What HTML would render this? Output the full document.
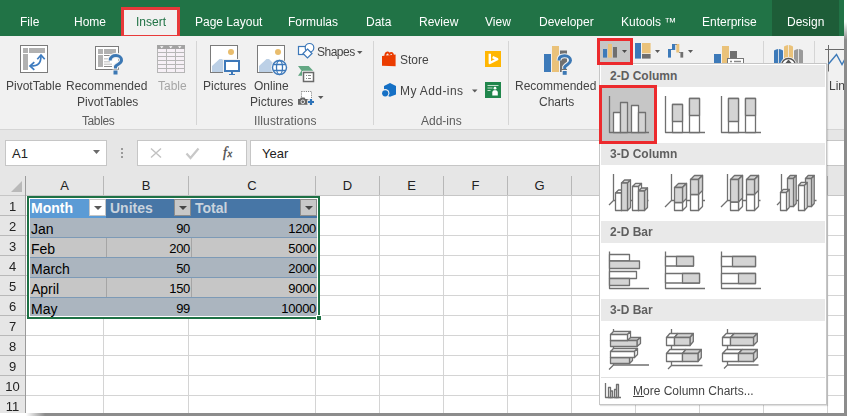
<!DOCTYPE html>
<html><head><meta charset="utf-8">
<style>
*{margin:0;padding:0;box-sizing:border-box}
html,body{width:847px;height:416px;overflow:hidden;background:#fff;font-family:"Liberation Sans",sans-serif}
.a{position:absolute;white-space:nowrap}
#tabs{position:absolute;left:0;top:0;width:847px;height:36px;background:#217346}
.tab{position:absolute;top:15px;font-size:12px;color:#fff;line-height:14px;will-change:transform}
#ribbon{position:absolute;left:0;top:36px;width:847px;height:94px;background:#f1f1f1;border-bottom:1px solid #d5d5d5}
.rl{position:absolute;font-size:12px;color:#444;line-height:14px;will-change:transform}
.gl{position:absolute;will-change:transform;font-size:12px;color:#5c5c5c;line-height:14px;top:114px}
.sep{position:absolute;top:41px;width:1px;height:84px;background:#d5d5d5}
#fbar{position:absolute;left:0;top:130px;width:847px;height:66px;background:#e6e6e6}
.box{position:absolute;background:#fff;border:1px solid #c6c6c6}
.ch{position:absolute;top:176px;height:19px;font-size:13px;color:#222;text-align:center;line-height:20px}
.cl{position:absolute;top:176px;width:1px;height:19px;background:#b7b7b7}
.rh{position:absolute;left:0;width:25px;height:19px;font-size:13px;color:#222;text-align:center;line-height:21px}
.gv{position:absolute;top:196px;width:1px;height:220px;background:#d4d4d4}
.gh{position:absolute;left:26px;height:1px;width:821px;background:#d4d4d4}
.rhl{position:absolute;left:0;width:25px;height:1px;background:#b9b9b9}
.cell{position:absolute;font-size:12px;line-height:19px;height:19px;color:#000}
.fb{position:absolute;top:199px;width:17px;height:17px;background:#c8c8c8;border:1px solid #8c8c8c}
.fb i{position:absolute;left:4px;top:6px;width:0;height:0;border-left:4px solid transparent;border-right:4px solid transparent;border-top:4px solid #464646}
.tc{position:absolute;font-size:14px;line-height:20px;color:#000;white-space:nowrap}
.band{position:absolute;left:601px;width:224px;height:22px;background:#e9e9e9}
.bt{position:absolute;left:610px;font-size:12px;font-weight:bold;color:#5f5f5f;line-height:22px;white-space:nowrap}
</style></head><body>
<!-- tabs -->
<div id="tabs">
  <div class="a" style="left:772px;top:0;width:67px;height:36px;background:#1e5d38"></div>
  <div class="a" style="left:121px;top:7px;width:59px;height:31px;background:#f1f1f1;border:3px solid #e8393a;border-bottom:none"></div>
  <div class="a" style="left:121px;top:7px;width:59px;height:31px;border:3px solid #e8393a"></div>
  <span class="tab a" style="left:20px">File</span>
  <span class="tab a" style="left:74px">Home</span>
  <span class="tab a" style="left:136px;color:#217346">Insert</span>
  <span class="tab a" style="left:195px">Page Layout</span>
  <span class="tab a" style="left:288px">Formulas</span>
  <span class="tab a" style="left:366px">Data</span>
  <span class="tab a" style="left:419px">Review</span>
  <span class="tab a" style="left:485px">View</span>
  <span class="tab a" style="left:539px">Developer</span>
  <span class="tab a" style="left:621px">Kutools ™</span>
  <span class="tab a" style="left:702px">Enterprise</span>
  <span class="tab a" style="left:787px">Design</span>
</div>
<!-- ribbon -->
<div id="ribbon"></div>
<span class="rl a" style="left:6px;top:79px">PivotTable</span>
<span class="rl a" style="left:66px;top:79px">Recommended</span>
<span class="rl a" style="left:77px;top:95px">PivotTables</span>
<span class="rl a" style="left:158px;top:79px;color:#a6a6a6">Table</span>
<span class="gl a" style="left:82px;letter-spacing:-0.4px">Tables</span>
<div class="sep" style="left:196px"></div>
<span class="rl a" style="left:203px;top:79px">Pictures</span>
<span class="rl a" style="left:254px;top:79px">Online</span>
<span class="rl a" style="left:250px;top:95px">Pictures</span>
<span class="rl a" style="left:317px;top:45px;letter-spacing:-0.5px">Shapes</span>
<span class="gl a" style="left:254px;letter-spacing:0.15px">Illustrations</span>
<div class="sep" style="left:373px"></div>
<span class="rl a" style="left:400px;top:53px">Store</span>
<span class="rl a" style="left:400px;top:84px;letter-spacing:0.4px">My Add-ins</span>
<span class="gl a" style="left:421px">Add-ins</span>
<div class="sep" style="left:508px"></div>
<span class="rl a" style="left:515px;top:79px">Recommended</span>
<span class="rl a" style="left:539px;top:95px">Charts</span>
<span class="rl a" style="left:829px;top:79px">Lin</span>

<svg class="a" style="left:0;top:0" width="847" height="130">
<!-- PivotTable -->
<rect x="20.5" y="45.5" width="27" height="27" fill="#fff" stroke="#7b7b7b"/>
<rect x="23" y="48" width="5" height="5" fill="#b1b1b1"/>
<rect x="29" y="48" width="16" height="5" fill="#b1b1b1"/>
<rect x="23" y="54" width="5" height="16" fill="#b1b1b1"/>
<path d="M30.5,66 C38.5,66 41,63 41,55.5" fill="none" stroke="#3d7bbf" stroke-width="1.7"/>
<path d="M37.3,59.3 L41,55 L44.7,59.3" fill="none" stroke="#3d7bbf" stroke-width="1.7"/>
<path d="M34.3,62.2 L30,66 L34.3,69.8" fill="none" stroke="#3d7bbf" stroke-width="1.7"/>
<!-- Recommended PivotTables -->
<rect x="95.5" y="46.5" width="23" height="23" fill="#fff" stroke="#7b7b7b"/>
<rect x="98" y="49" width="5" height="5" fill="#b1b1b1"/>
<rect x="104" y="49" width="12" height="5" fill="#b1b1b1"/>
<rect x="98" y="55" width="5" height="12" fill="#b1b1b1"/>
<rect x="104" y="55" width="9" height="1" fill="#8a8a8a"/>
<rect x="104" y="58" width="8" height="1.5" fill="#d0d0d0"/>
<rect x="104" y="61" width="6" height="1.5" fill="#d0d0d0"/>
<rect x="104" y="63.5" width="8" height="1.5" fill="#d0d0d0"/>
<rect x="104" y="66" width="8" height="1" fill="#8a8a8a"/>
<path d="M110.2,60.5 C110.2,57 113,55.5 116,55.5 C119.2,55.5 121.5,57.5 121.5,60.3 C121.5,63.5 117.5,64 115.5,66.5 L115.5,68.5" fill="none" stroke="#f1f1f1" stroke-width="5.5"/>
<rect x="112.5" y="69.5" width="6" height="6" fill="#f1f1f1"/>
<path d="M110.2,60.5 C110.2,57 113,55.5 116,55.5 C119.2,55.5 121.5,57.5 121.5,60.3 C121.5,63.5 117.5,64 115.5,66.5 L115.5,68.5" fill="none" stroke="#3c78b4" stroke-width="3"/>
<rect x="113.5" y="70.5" width="4" height="4" fill="#3c78b4"/>
<!-- Table (disabled) -->
<rect x="157" y="45" width="28" height="28" fill="#b6b6b6"/>
<rect x="157" y="45" width="28" height="4" fill="#a3a3a3"/>
<path d="M160,46.2 h3.5 l-1.75,2 z M169,46.2 h3.5 l-1.75,2 z M178,46.2 h3.5 l-1.75,2 z" fill="#fff"/>
<g fill="#f6f0f6">
<rect x="158" y="49" width="8" height="3"/><rect x="167" y="49" width="8" height="3"/><rect x="176" y="49" width="8" height="3"/>
<rect x="158" y="53" width="8" height="3"/><rect x="167" y="53" width="8" height="3"/><rect x="176" y="53" width="8" height="3"/>
<rect x="158" y="57" width="8" height="3"/><rect x="167" y="57" width="8" height="3"/><rect x="176" y="57" width="8" height="3"/>
<rect x="158" y="61" width="8" height="3"/><rect x="167" y="61" width="8" height="3"/><rect x="176" y="61" width="8" height="3"/>
<rect x="158" y="65" width="8" height="3"/><rect x="167" y="65" width="8" height="3"/><rect x="176" y="65" width="8" height="3"/>
<rect x="158" y="69" width="8" height="3"/><rect x="167" y="69" width="8" height="3"/><rect x="176" y="69" width="8" height="3"/>
</g>
<!-- Pictures -->
<rect x="210.5" y="45.5" width="27" height="27" fill="#fff" stroke="#7b7b7b"/>
<circle cx="231" cy="52" r="3" fill="#e9bd6d"/>
<path d="M212,72 V66 L219.5,59 H222 L228,65 V72 Z" fill="#bcd0e6"/>
<rect x="223" y="59" width="18" height="14" fill="#f1f1f1"/>
<rect x="224" y="60" width="16" height="12" fill="#3d78b9"/>
<rect x="226" y="62" width="12" height="8" fill="#fff"/>
<rect x="231" y="72" width="2" height="2" fill="#3d78b9"/>
<rect x="229" y="74" width="6" height="1" fill="#3d78b9"/>
<!-- Online Pictures -->
<rect x="257.5" y="45.5" width="27" height="27" fill="#fff" stroke="#7b7b7b"/>
<circle cx="278" cy="52" r="3" fill="#e9bd6d"/>
<path d="M259,72 V66 L266.5,59 H269 L275,65 V72 Z" fill="#bcd0e6"/>
<circle cx="279.5" cy="67.5" r="8.5" fill="#f1f1f1"/>
<circle cx="279.5" cy="67.5" r="7" fill="#fff" stroke="#3d78b9" stroke-width="1.4"/>
<ellipse cx="279.5" cy="67.5" rx="3" ry="7" fill="none" stroke="#3d78b9" stroke-width="1.3"/>
<path d="M273,64.5 H286 M273,70.5 H286" stroke="#3d78b9" stroke-width="1.3"/>
<!-- Shapes -->
<rect x="298.5" y="46.5" width="8" height="8" fill="#fff" stroke="#3d78b9" stroke-width="1.2"/>
<circle cx="309.5" cy="47.8" r="4.3" fill="#fff" stroke="#3d78b9" stroke-width="1.2"/>
<path d="M307.5,49 L312,53.5 L307.5,58 L303,53.5 Z" fill="#fff" stroke="#3d78b9" stroke-width="1.2"/>
<path d="M357,51 h5.5 l-2.75,3 z" fill="#5a5a5a"/>
<!-- SmartArt -->
<path d="M298,66 H308.7 L313.2,70.8 H303 V75.8 H298 L301.5,70.8 Z" fill="#63a783"/>
<rect x="302" y="71" width="13" height="12" fill="#f1f1f1"/>
<rect x="303.5" y="72.5" width="10" height="9" fill="#fff" stroke="#6a6a6a" stroke-width="1.5"/>
<path d="M306,75.5 h1 M308,75.5 h3 M306,78.5 h1 M308,78.5 h3" stroke="#888" stroke-width="1"/>
<!-- Screenshot -->
<rect x="301.5" y="91.5" width="10" height="8" fill="#fff" stroke="#777" stroke-dasharray="1,1.2"/>
<path d="M298,99 H300 L301,97.5 H304.5 L305.5,99 H307.5 V104.8 H298 Z" fill="#666"/>
<circle cx="302.8" cy="101.8" r="1.8" fill="none" stroke="#eee" stroke-width="1"/>
<path d="M311,98.5 V105.5 M307.5,102 H314.5" stroke="#f1f1f1" stroke-width="4"/>
<path d="M311,99 V105 M308,102 H314" stroke="#2e73b8" stroke-width="2.2"/>
<path d="M318,96 h5.5 l-2.75,3 z" fill="#5a5a5a"/>
<!-- Store -->
<path d="M385.3,56 C385.3,51.5 389.5,51.5 389.5,55 C389.5,52 393,52 393,55.5" fill="none" stroke="#eb3c00" stroke-width="1.8"/>
<path d="M382,56 L395.6,54.4 V66.2 L382,65.8 Z" fill="#eb3c00"/>
<!-- My Add-ins -->
<path d="M390,83 L396,86 V94.5 L390,96.8 L384,94.5 V86 Z" fill="#1570c5"/>
<circle cx="385.2" cy="93.3" r="4.2" fill="#f1f1f1"/>
<circle cx="385.2" cy="93.3" r="3.1" fill="#1570c5"/>
<path d="M397.2,90.5 h5.5 l-2.75,3 z" fill="none"/>
<path d="M472,89.5 h5.5 l-2.75,3 z" fill="#5a5a5a"/>
<!-- Bing -->
<rect x="485" y="51" width="16" height="16" fill="#ffb602"/>
<path d="M489.8,53.8 V63 L497.2,59.2 L492.6,57.2" fill="none" stroke="#fff" stroke-width="2.4" stroke-linejoin="round"/>
<!-- People graph -->
<rect x="485" y="82" width="16" height="16" fill="#20864c"/>
<path d="M487.5,85.5 h11 M487.5,88 h5 M487.5,90.5 h3" stroke="#d6eadd" stroke-width="0.9"/>
<circle cx="495" cy="88.2" r="1.4" fill="#fff"/>
<path d="M492.3,95.5 V92.5 C492.3,90.8 493.5,90.3 495,90.3 C496.5,90.3 497.8,90.8 497.8,92.5 V95.5 Z" fill="#fff"/>
<!-- Recommended Charts -->
<rect x="544" y="54" width="7" height="18" fill="#3d7ab9"/>
<rect x="552" y="46" width="7" height="26" fill="#eac27a"/>
<rect x="560" y="50.5" width="7" height="21.5" fill="#707070"/>
<path d="M559,60.5 C559,57 561.5,55.8 564.7,55.8 C568,55.8 570.5,57.8 570.5,60.5 C570.5,63.8 566.5,64.2 564.7,67 L564.7,69" fill="none" stroke="#f1f1f1" stroke-width="5"/>
<rect x="561.7" y="70" width="6" height="6" fill="#f1f1f1"/>
<path d="M559,60.5 C559,57 561.5,55.8 564.7,55.8 C568,55.8 570.5,57.8 570.5,60.5 C570.5,63.8 566.5,64.2 564.7,67 L564.7,69" fill="none" stroke="#3c78b4" stroke-width="3"/>
<rect x="562.7" y="71" width="4" height="3.8" fill="#3c78b4"/>
<!-- Column chart button (selected) -->
<!-- Hierarchy -->
<rect x="635" y="43" width="6" height="15.6" fill="#3d7ab9"/>
<rect x="642" y="43" width="8.6" height="10.3" fill="#eac27a"/>
<rect x="642" y="54" width="8.6" height="4.6" fill="#6f6f6f"/>
<path d="M655,50 h5 l-2.5,3 z" fill="#5a5a5a"/>
<!-- Waterfall -->
<path d="M669.5,49.5 H673.6" stroke="#3d7ab9" stroke-width="1"/>
<rect x="668" y="49" width="3" height="8.6" fill="#3d7ab9"/>
<rect x="672" y="44" width="3.2" height="6" fill="#3d7ab9"/>
<rect x="676.3" y="44" width="3" height="8.5" fill="#eac27a"/>
<rect x="680.4" y="52" width="2.8" height="5.6" fill="#6f6f6f"/>
<path d="M675,44.5 H677 M679,52.5 H681" stroke="#888" stroke-width="1"/>
<path d="M688,50 h5 l-2.5,3 z" fill="#5a5a5a"/>
<!-- Pivot chart -->
<rect x="714" y="54" width="7" height="12" fill="#3d7ab9"/>
<rect x="722" y="46" width="7" height="20" fill="#eac27a"/>
<rect x="730" y="51" width="7" height="15" fill="#707070"/>
<rect x="727.5" y="58.5" width="16" height="8" fill="#fff" stroke="#777"/>
<path d="M730,61.5 h2 M734,61.5 h7" stroke="#888" stroke-width="1.5"/>
<rect x="763" y="41" width="1" height="84" fill="#d5d5d5"/>
<!-- Maps -->
<path d="M774,50.5 Q776,49 778.2,49 V66 H774 Z M779,49 Q781,49 783,50.5 V66 H779 Z" fill="#3d7ab9"/>
<path d="M784,46.5 Q786,45 788.2,45 V66 H784 Z M789,45 Q791,45 793,46.5 V66 H789 Z" fill="#eac27a"/>
<path d="M794,50.5 Q796,49 798.2,49 V66 H794 Z M799,49 Q801,49 803,50.5 V66 H799 Z" fill="#9a9a9a"/>
<circle cx="788.5" cy="65.5" r="8.5" fill="#f1f1f1"/>
<circle cx="788.5" cy="65.5" r="7" fill="#fff" stroke="#555" stroke-width="1.4"/>
<path d="M785.5,63 L788.5,59.5 L791.5,63 Z" fill="#555"/>
<rect x="814" y="41" width="1" height="84" fill="#d5d5d5"/>
<!-- Line chart -->
<path d="M828.5,45 V71.5 M825,49.5 H844" stroke="#6a6a6a" stroke-width="1"/>
<path d="M828.5,64 L836.5,54.5 L842,64.5 L846,57" fill="none" stroke="#3d7ab9" stroke-width="1.4"/>
</svg>

<!-- formula bar -->
<div id="fbar"></div>
<div class="box" style="left:5px;top:140px;width:102px;height:26px"></div>
<span class="a" style="left:12px;top:146px;font-size:13px;color:#222">A1</span>
<div class="box" style="left:137px;top:140px;width:110px;height:26px"></div>
<div class="box" style="left:250px;top:140px;width:597px;height:26px"></div>
<span class="a" style="left:262px;top:146px;font-size:13px;color:#222">Year</span>

<svg class="a" style="left:0;top:130px" width="260" height="66">
<path d="M93,20 H100 L96.5,24 Z" fill="#6a6a6a"/>
<rect x="121" y="18" width="2" height="2" fill="#9a9a9a"/>
<rect x="121" y="22" width="2" height="2" fill="#9a9a9a"/>
<rect x="121" y="26" width="2" height="2" fill="#9a9a9a"/>
<path d="M151,18.5 L161,27.5 M161,18.5 L151,27.5" stroke="#c2c2c2" stroke-width="1.4"/>
<path d="M186.5,23.5 L190.5,28 L198.5,18.5" fill="none" stroke="#c8c8c8" stroke-width="2.2"/>
<text x="223" y="26.5" font-family="Liberation Serif" font-style="italic" font-size="14" fill="#4a4a4a" stroke="#4a4a4a" stroke-width="0.3">f</text>
<text x="227.5" y="27" font-family="Liberation Serif" font-style="italic" font-size="10.5" fill="#4a4a4a" stroke="#4a4a4a" stroke-width="0.3">x</text>
<path d="M22,51 V62 H11 Z" fill="#b9b9b9"/>
</svg>
<!-- column headers -->
<span class="ch" style="left:26px;width:77px">A</span>
<span class="ch" style="left:104px;width:84px">B</span>
<span class="ch" style="left:189px;width:126px">C</span>
<span class="ch" style="left:316px;width:63px">D</span>
<span class="ch" style="left:380px;width:63px">E</span>
<span class="ch" style="left:444px;width:63px">F</span>
<span class="ch" style="left:508px;width:63px">G</span>
<div class="cl" style="left:25px"></div>
<div class="cl" style="left:103px"></div>
<div class="cl" style="left:188px"></div>
<div class="cl" style="left:315px"></div>
<div class="cl" style="left:379px"></div>
<div class="cl" style="left:443px"></div>
<div class="cl" style="left:507px"></div>
<div class="cl" style="left:571px"></div>
<div class="cl" style="left:635px"></div>
<div class="cl" style="left:699px"></div>
<div class="cl" style="left:763px"></div>
<div class="cl" style="left:827px"></div>
<div class="a" style="left:0;top:195px;width:847px;height:1px;background:#c6c6c6"></div>

<!-- grid -->
<div class="a" style="left:0;top:196px;width:25px;height:220px;background:#e6e6e6"></div>
<div class="a" style="left:25px;top:176px;width:1px;height:240px;background:#9b9b9b"></div>
<div class="gv" style="left:103px"></div>
<div class="gv" style="left:188px"></div>
<div class="gv" style="left:315px"></div>
<div class="gv" style="left:379px"></div>
<div class="gv" style="left:443px"></div>
<div class="gv" style="left:507px"></div>
<div class="gv" style="left:571px"></div>
<div class="gv" style="left:635px"></div>
<div class="gv" style="left:699px"></div>
<div class="gv" style="left:763px"></div>
<div class="gv" style="left:827px"></div>
<div class="gh" style="top:215px"></div>
<div class="gh" style="top:235px"></div>
<div class="gh" style="top:255px"></div>
<div class="gh" style="top:275px"></div>
<div class="gh" style="top:295px"></div>
<div class="gh" style="top:315px"></div>
<div class="gh" style="top:335px"></div>
<div class="gh" style="top:355px"></div>
<div class="gh" style="top:375px"></div>
<div class="gh" style="top:395px"></div>
<div class="rhl" style="top:215px"></div>
<div class="rhl" style="top:235px"></div>
<div class="rhl" style="top:255px"></div>
<div class="rhl" style="top:275px"></div>
<div class="rhl" style="top:295px"></div>
<div class="rhl" style="top:315px"></div>
<div class="rhl" style="top:335px"></div>
<div class="rhl" style="top:355px"></div>
<div class="rhl" style="top:375px"></div>
<div class="rhl" style="top:395px"></div>
<span class="rh" style="top:196px">1</span>
<span class="rh" style="top:216px">2</span>
<span class="rh" style="top:236px">3</span>
<span class="rh" style="top:256px">4</span>
<span class="rh" style="top:276px">5</span>
<span class="rh" style="top:296px">6</span>
<span class="rh" style="top:316px">7</span>
<span class="rh" style="top:336px">8</span>
<span class="rh" style="top:356px">9</span>
<span class="rh" style="top:376px">10</span>
<span class="rh" style="top:396px">11</span>

<!-- table -->
<div id="tbl">
<div class="a" style="left:27px;top:196px;width:293px;height:123px;background:#1e7145"></div>
<div class="a" style="left:29px;top:198px;width:289px;height:119px;background:#fff"></div>
<div class="a" style="left:30px;top:199px;width:287px;height:19px;background:#4776a6"></div>
<div class="a" style="left:30px;top:199px;width:76px;height:19px;background:#5b9bd5"></div>
<div class="a" style="left:30px;top:218px;width:287px;height:98px;background:#abb5bf"></div>
<div class="a" style="left:30px;top:237px;width:287px;height:1px;background:#7d9ab6"></div>
<div class="a" style="left:30px;top:238px;width:287px;height:19px;background:#c6c6c6"></div>
<div class="a" style="left:30px;top:257px;width:287px;height:1px;background:#7d9ab6"></div>
<div class="a" style="left:30px;top:277px;width:287px;height:1px;background:#7d9ab6"></div>
<div class="a" style="left:30px;top:278px;width:287px;height:19px;background:#c6c6c6"></div>
<div class="a" style="left:30px;top:297px;width:287px;height:1px;background:#7d9ab6"></div>
<div class="a" style="left:106px;top:238px;width:1px;height:19px;background:#a5a5a5"></div>
<div class="a" style="left:191px;top:238px;width:1px;height:19px;background:#a5a5a5"></div>
<div class="a" style="left:106px;top:278px;width:1px;height:19px;background:#a5a5a5"></div>
<div class="a" style="left:191px;top:278px;width:1px;height:19px;background:#a5a5a5"></div>
<div class="a" style="left:316px;top:315px;width:6px;height:6px;background:#1e7145;border:1px solid #fff"></div>
<div class="fb" style="left:89px;background:#fff;border-color:#c6c6c6"><i style="border-top-color:#595959"></i></div>
<div class="fb" style="left:174px"><i></i></div>
<div class="fb" style="left:300px"><i></i></div>
<span class="tc" style="left:31px;top:198px;color:#fff;font-weight:bold;font-size:14px">Month</span>
<span class="tc" style="left:110px;top:198px;color:#c9d3dd;font-weight:bold;font-size:14px">Unites</span>
<span class="tc" style="left:195px;top:198px;color:#c9d3dd;font-weight:bold;font-size:14px">Total</span>
<span class="tc" style="left:31px;top:219px">Jan</span>
<span class="tc" style="left:31px;top:239px">Feb</span>
<span class="tc" style="left:31px;top:259px">March</span>
<span class="tc" style="left:31px;top:279px">April</span>
<span class="tc" style="left:31px;top:299px">May</span>
<span class="tc r" style="font-size:13px;letter-spacing:-0.3px;right:657px;top:219px">90</span>
<span class="tc r" style="font-size:13px;letter-spacing:-0.3px;right:657px;top:239px">200</span>
<span class="tc r" style="font-size:13px;letter-spacing:-0.3px;right:657px;top:259px">50</span>
<span class="tc r" style="font-size:13px;letter-spacing:-0.3px;right:657px;top:279px">150</span>
<span class="tc r" style="font-size:13px;letter-spacing:-0.3px;right:657px;top:299px">99</span>
<span class="tc r" style="font-size:13px;letter-spacing:-0.3px;right:531px;top:219px">1200</span>
<span class="tc r" style="font-size:13px;letter-spacing:-0.3px;right:531px;top:239px">5000</span>
<span class="tc r" style="font-size:13px;letter-spacing:-0.3px;right:531px;top:259px">2000</span>
<span class="tc r" style="font-size:13px;letter-spacing:-0.3px;right:531px;top:279px">9000</span>
<span class="tc r" style="font-size:13px;letter-spacing:-0.3px;right:531px;top:299px">10000</span>
</div>

<!-- dropdown -->
<div id="dd">
<div class="a" style="left:599px;top:63px;width:228px;height:342px;background:#fff;border:1px solid #c6c6c6;box-shadow:1px 1px 1px rgba(0,0,0,0.12)"></div>
<div class="band" style="top:65px"></div>
<div class="band" style="top:143px"></div>
<div class="band" style="top:221px"></div>
<div class="band" style="top:299px"></div>
<span class="bt" style="top:65px">2-D Column</span>
<span class="bt" style="top:143px">3-D Column</span>
<span class="bt" style="top:221px">2-D Bar</span>
<span class="bt" style="top:299px">3-D Bar</span>
<div class="a" style="left:601px;top:377px;width:224px;height:1px;background:#e1e1e1"></div>
<span class="a" style="left:633px;top:384px;font-size:12px;line-height:14px;color:#444">More Column Charts...</span>
<div class="a" style="left:633px;top:396px;width:11px;height:1px;background:#444"></div>
<div class="a" style="left:599px;top:85px;width:58px;height:59px;background:#c6c6c6;border:3px solid #ec2a2d"></div>
<svg class="a" style="left:0;top:0" width="847" height="416">
<g fill="none" stroke="#707070" stroke-width="1.3" stroke-linejoin="round">
<!-- 2D clustered column -->
<path d="M609.5,96 V132.5 H649"/>
<rect x="613.5" y="112.5" width="7" height="20" fill="#fff"/>
<rect x="620.5" y="102.5" width="7" height="30" fill="#d4d4d4"/>
<rect x="631.5" y="105.5" width="7" height="27" fill="#fff"/>
<rect x="638.5" y="112.5" width="7" height="20" fill="#d4d4d4"/>
<!-- 2D stacked column -->
<path d="M665.5,96 V132.5 H705"/>
<rect x="672.5" y="104.5" width="10" height="28" fill="#fff"/>
<rect x="672.5" y="104.5" width="10" height="17" fill="#d4d4d4"/>
<rect x="689.5" y="98.5" width="10" height="34" fill="#fff"/>
<rect x="689.5" y="98.5" width="10" height="17" fill="#d4d4d4"/>
<!-- 2D 100% stacked column -->
<path d="M721.5,96 V132.5 H761"/>
<rect x="728.5" y="98.5" width="10" height="34" fill="#fff"/>
<rect x="728.5" y="98.5" width="10" height="23" fill="#d4d4d4"/>
<rect x="745.5" y="98.5" width="10" height="34" fill="#fff"/>
<rect x="745.5" y="98.5" width="10" height="17" fill="#d4d4d4"/>
<!--3DSTART-->
<path d="M613.5,174 V200.5 L609,205 M613.5,200.5 H648.5"/>
<path d="M615.5,193.0 L618.5,190.0 L624.5,190.0 L621.5,193.0 Z" fill="#fff"/>
<path d="M621.5,193.0 L624.5,190.0 L624.5,207.5 L621.5,210.5 Z" fill="#fff"/>
<rect x="615.5" y="193" width="6.0" height="17.5" fill="#fff"/>
<path d="M621.5,183.0 L624.5,180.0 L630.5,180.0 L627.5,183.0 Z" fill="#d4d4d4"/>
<path d="M627.5,183.0 L630.5,180.0 L630.5,207.5 L627.5,210.5 Z" fill="#d4d4d4"/>
<rect x="621.5" y="183" width="6.0" height="27.5" fill="#d4d4d4"/>
<path d="M632.5,186.5 L635.5,183.5 L641.5,183.5 L638.5,186.5 Z" fill="#fff"/>
<path d="M638.5,186.5 L641.5,183.5 L641.5,207.5 L638.5,210.5 Z" fill="#fff"/>
<rect x="632.5" y="186.5" width="6.0" height="24.0" fill="#fff"/>
<path d="M638.5,191.0 L641.5,188.0 L647.5,188.0 L644.5,191.0 Z" fill="#d4d4d4"/>
<path d="M644.5,191.0 L647.5,188.0 L647.5,207.5 L644.5,210.5 Z" fill="#d4d4d4"/>
<rect x="638.5" y="191" width="6.0" height="19.5" fill="#d4d4d4"/>
<path d="M671.5,174 V200.5 L665,207 M671.5,200.5 H705"/>
<path d="M674.5,187.5 L678.5,183.5 L686.5,183.5 L682.5,187.5 Z" fill="#d4d4d4"/>
<path d="M682.5,187.5 L686.5,183.5 L686.5,206.5 L682.5,210.5 Z" fill="#fff"/>
<path d="M682.5,187.5 L686.5,183.5 L686.5,198.5 L682.5,202.5 Z" fill="#d4d4d4"/>
<rect x="674.5" y="202.5" width="8.0" height="8.0" fill="#fff"/>
<rect x="674.5" y="187.5" width="8.0" height="15.0" fill="#d4d4d4"/>
<path d="M690.5,179.5 L694.5,175.5 L702.5,175.5 L698.5,179.5 Z" fill="#d4d4d4"/>
<path d="M698.5,179.5 L702.5,175.5 L702.5,206.5 L698.5,210.5 Z" fill="#fff"/>
<path d="M698.5,179.5 L702.5,175.5 L702.5,190.5 L698.5,194.5 Z" fill="#d4d4d4"/>
<rect x="690.5" y="194.5" width="8.0" height="16.0" fill="#fff"/>
<rect x="690.5" y="179.5" width="8.0" height="15.0" fill="#d4d4d4"/>
<path d="M727.5,174 V200.5 L721,207 M727.5,200.5 H760.5"/>
<path d="M730.5,179.5 L734.5,175.5 L742.5,175.5 L738.5,179.5 Z" fill="#d4d4d4"/>
<path d="M738.5,179.5 L742.5,175.5 L742.5,206.5 L738.5,210.5 Z" fill="#fff"/>
<path d="M738.5,179.5 L742.5,175.5 L742.5,198.0 L738.5,202.0 Z" fill="#d4d4d4"/>
<rect x="730.5" y="202" width="8.0" height="8.5" fill="#fff"/>
<rect x="730.5" y="179.5" width="8.0" height="22.5" fill="#d4d4d4"/>
<path d="M746.5,179.5 L750.5,175.5 L758.5,175.5 L754.5,179.5 Z" fill="#d4d4d4"/>
<path d="M754.5,179.5 L758.5,175.5 L758.5,206.5 L754.5,210.5 Z" fill="#fff"/>
<path d="M754.5,179.5 L758.5,175.5 L758.5,190.5 L754.5,194.5 Z" fill="#d4d4d4"/>
<rect x="746.5" y="194.5" width="8.0" height="16.0" fill="#fff"/>
<rect x="746.5" y="179.5" width="8.0" height="15.0" fill="#d4d4d4"/>
<path d="M781.5,174 V200.5 L777,205 M781.5,200.5 H816.5"/>
<path d="M787.5,178.5 L790.2,175.5 L796.2,175.5 L793.5,178.5 Z" fill="#d4d4d4"/>
<path d="M793.5,178.5 L796.2,175.5 L796.2,203.5 L793.5,206.5 Z" fill="#d4d4d4"/>
<rect x="787.5" y="178.5" width="6.0" height="28.0" fill="#d4d4d4"/>
<path d="M805.5,178.5 L808.2,175.5 L814.2,175.5 L811.5,178.5 Z" fill="#d4d4d4"/>
<path d="M811.5,178.5 L814.2,175.5 L814.2,203.5 L811.5,206.5 Z" fill="#d4d4d4"/>
<rect x="805.5" y="178.5" width="6.0" height="28.0" fill="#d4d4d4"/>
<path d="M780.5,192.5 L783.2,189.5 L789.2,189.5 L786.5,192.5 Z" fill="#fff"/>
<path d="M786.5,192.5 L789.2,189.5 L789.2,207.5 L786.5,210.5 Z" fill="#fff"/>
<rect x="780.5" y="192.5" width="6.0" height="18.0" fill="#fff"/>
<path d="M798.5,185.5 L801.2,182.5 L807.2,182.5 L804.5,185.5 Z" fill="#fff"/>
<path d="M804.5,185.5 L807.2,182.5 L807.2,207.5 L804.5,210.5 Z" fill="#fff"/>
<rect x="798.5" y="185.5" width="6.0" height="25.0" fill="#fff"/>
<path d="M609.5,251.5 V288.5 H649"/>
<rect x="609.5" y="254.5" width="20" height="6.5" fill="#fff"/>
<rect x="609.5" y="261" width="30" height="7.5" fill="#d4d4d4"/>
<rect x="609.5" y="271.5" width="27" height="7" fill="#fff"/>
<rect x="609.5" y="278.5" width="20" height="7" fill="#d4d4d4"/>
<path d="M665.5,251.5 V288.5 H705"/>
<rect x="665.5" y="256.5" width="28" height="9.5" fill="#fff"/>
<rect x="676.5" y="256.5" width="17" height="9.5" fill="#d4d4d4"/>
<rect x="665.5" y="273.5" width="34" height="9.5" fill="#fff"/>
<rect x="682.5" y="273.5" width="17" height="9.5" fill="#d4d4d4"/>
<path d="M721.5,251.5 V288.5 H761"/>
<rect x="721.5" y="256.5" width="34" height="10" fill="#fff"/>
<rect x="732.5" y="256.5" width="23" height="10" fill="#d4d4d4"/>
<rect x="721.5" y="273.5" width="34" height="10" fill="#fff"/>
<rect x="738.5" y="273.5" width="17" height="10" fill="#d4d4d4"/>
<path d="M613.5,329 V365 L609,369.5 M613.5,365 H649"/>
<path d="M610.5,340.5 L614.0,337.5 L640.5,337.5 L637.0,340.5 Z" fill="#d4d4d4"/>
<path d="M637.0,340.5 L640.5,337.5 L640.5,343.5 L637.0,346.5 Z" fill="#d4d4d4"/>
<rect x="610.5" y="340.5" width="26.5" height="6.0" fill="#d4d4d4"/>
<path d="M610.5,334.5 L613.5,331.5 L630.5,331.5 L627.5,334.5 Z" fill="#fff"/>
<path d="M627.5,334.5 L630.5,331.5 L630.5,337.5 L627.5,340.5 Z" fill="#fff"/>
<rect x="610.5" y="334.5" width="17.0" height="6.0" fill="#fff"/>
<path d="M610.5,357.5 L613.5,354.5 L632.5,354.5 L629.5,357.5 Z" fill="#d4d4d4"/>
<path d="M629.5,357.5 L632.5,354.5 L632.5,360.5 L629.5,363.5 Z" fill="#d4d4d4"/>
<rect x="610.5" y="357.5" width="19.0" height="6.0" fill="#d4d4d4"/>
<path d="M610.5,351.5 L613.5,348.5 L637.5,348.5 L634.5,351.5 Z" fill="#fff"/>
<path d="M634.5,351.5 L637.5,348.5 L637.5,354.5 L634.5,357.5 Z" fill="#fff"/>
<rect x="610.5" y="351.5" width="24.0" height="6.0" fill="#fff"/>
<path d="M671.5,329 V365.5 L668,369 M671.5,365.5 H702.5"/>
<path d="M666.5,337.5 L669.8,333.5 L677.8,333.5 L674.5,337.5 Z" fill="#fff"/>
<path d="M674.5,337.5 L677.8,333.5 L693.3,333.5 L690.0,337.5 Z" fill="#d4d4d4"/>
<path d="M690.0,337.5 L693.3,333.5 L693.3,341.5 L690.0,345.5 Z" fill="#d4d4d4"/>
<rect x="666.5" y="337.5" width="8.0" height="8.0" fill="#fff"/>
<rect x="674.5" y="337.5" width="15.5" height="8.0" fill="#d4d4d4"/>
<path d="M666.5,353.5 L669.8,349.5 L685.8,349.5 L682.5,353.5 Z" fill="#fff"/>
<path d="M682.5,353.5 L685.8,349.5 L701.3,349.5 L698.0,353.5 Z" fill="#d4d4d4"/>
<path d="M698.0,353.5 L701.3,349.5 L701.3,357.5 L698.0,361.5 Z" fill="#d4d4d4"/>
<rect x="666.5" y="353.5" width="16.0" height="8.0" fill="#fff"/>
<rect x="682.5" y="353.5" width="15.5" height="8.0" fill="#d4d4d4"/>
<path d="M727.5,329 V365 L724,368.5 M727.5,365 H758.5"/>
<path d="M722.5,337.5 L726.3,333.5 L734.3,333.5 L730.5,337.5 Z" fill="#fff"/>
<path d="M730.5,337.5 L734.3,333.5 L757.3,333.5 L753.5,337.5 Z" fill="#d4d4d4"/>
<path d="M753.5,337.5 L757.3,333.5 L757.3,341.5 L753.5,345.5 Z" fill="#d4d4d4"/>
<rect x="722.5" y="337.5" width="8.0" height="8.0" fill="#fff"/>
<rect x="730.5" y="337.5" width="23.0" height="8.0" fill="#d4d4d4"/>
<path d="M722.5,353.5 L726.3,349.5 L742.3,349.5 L738.5,353.5 Z" fill="#fff"/>
<path d="M738.5,353.5 L742.3,349.5 L757.3,349.5 L753.5,353.5 Z" fill="#d4d4d4"/>
<path d="M753.5,353.5 L757.3,349.5 L757.3,357.5 L753.5,361.5 Z" fill="#d4d4d4"/>
<rect x="722.5" y="353.5" width="16.0" height="8.0" fill="#fff"/>
<rect x="738.5" y="353.5" width="15.0" height="8.0" fill="#d4d4d4"/>
<path d="M605.5,383 V397.5 H621"/>
<rect x="608.5" y="387.5" width="2" height="10" fill="#fff"/>
<rect x="610.5" y="391" width="2" height="6.5" fill="#d4d4d4"/>
<rect x="614.5" y="389.5" width="2" height="8" fill="#fff"/>
<rect x="616.5" y="384.5" width="2" height="13" fill="#d4d4d4"/>
<!--3DEND-->
</g>
</svg>
</div>


<svg class="a" style="left:0;top:0" width="847" height="70">
<rect x="597" y="38" width="36" height="27" fill="#ec2a2d"/>
<rect x="600" y="41" width="30" height="21" fill="#c6c6c6"/>
<rect x="603" y="49" width="4" height="8.6" fill="#3d7ab9"/>
<rect x="608" y="44" width="4" height="13.6" fill="#eac27a"/>
<rect x="613" y="47" width="4" height="10.6" fill="#6f6f6f"/>
<path d="M622,50 h5 l-2.5,3 z" fill="#4a4a4a"/>
</svg>
<!-- shadow -->
<div class="a" style="left:844px;top:0;width:3px;height:416px;background:linear-gradient(#fff 0,#fff 22px,#8c8c8c 40px)"></div>
<div class="a" style="left:0;top:413px;width:847px;height:3px;background:linear-gradient(90deg,#fff 0,#fff 26px,#8c8c8c 45px)"></div>
</body></html>
